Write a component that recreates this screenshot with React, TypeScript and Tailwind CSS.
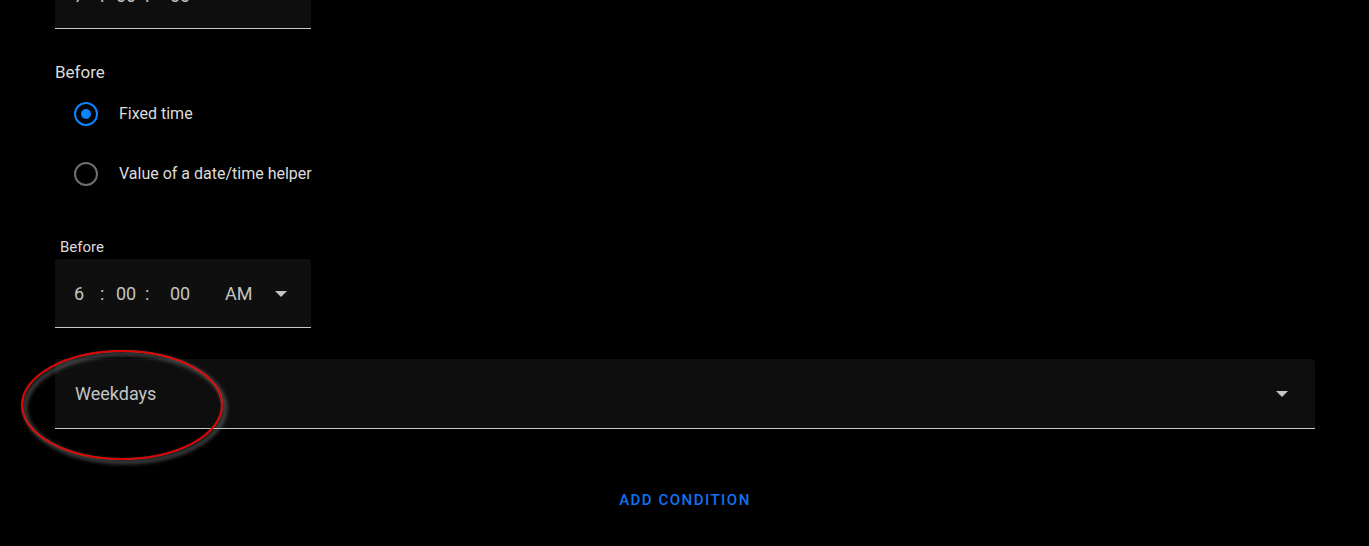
import React from "react"

function Caret({ className = "" }: { className?: string }) {
  return (
    <svg className={className} width="12" height="6" viewBox="0 0 12 6" fill="currentColor">
      <path d="M0 0l6 6 6-6z" />
    </svg>
  )
}

function TimeValue({ h, m, s, ap }: { h: string; m: string; s: string; ap: string }) {
  return (
    <div className="flex items-center text-[18px] leading-[22px] text-[#c4c4c4]">
      <span className="ml-[19px] w-[26px]">{h}</span>
      <span className="w-[16px]">:</span>
      <span className="w-[29px]">{m}</span>
      <span className="w-[25px]">:</span>
      <span className="w-[55px]">{s}</span>
      <span className="w-[50px]">{ap}</span>
      {ap && <Caret className="text-[#c4c4c4]" />}
    </div>
  )
}

function Radio({ checked, label }: { checked: boolean; label: string }) {
  return (
    <div className="flex h-[60px] items-center">
      <div className="flex w-[64px] justify-center">
        <span
          className={`flex h-[24px] w-[24px] items-center justify-center rounded-full border-2 ${
            checked ? "border-[#0a84ff]" : "border-[#6e6e6e]"
          }`}
        >
          {checked && <span className="h-[10px] w-[10px] rounded-full bg-[#0a84ff]" />}
        </span>
      </div>
      <span className="pl-[1px] text-[16px] text-[#dcdcdc]">{label}</span>
    </div>
  )
}

export default function App() {
  return (
    <div className="relative h-[546px] w-[1369px] overflow-hidden bg-black font-['Roboto','Liberation_Sans',sans-serif]">
      <div className="ml-[55px] flex w-[1260px] flex-col">
        {/* previous time field, scrolled mostly out of view */}
        <div className="-mt-[40px] flex h-[69px] w-[256px] items-center rounded-t border-b border-[#c8c8c8] bg-[#0e0e0e] pt-[3px]">
          <TimeValue h="7" m="00" s="00" ap="" />
        </div>

        <div className="mt-[33px] text-[17px] leading-[20px] text-[#dcdcdc]">Before</div>

        <div className="-ml-[1px] mt-[2px]">
          <Radio checked label="Fixed time" />
          <Radio checked={false} label="Value of a date/time helper" />
        </div>

        <div className="mt-[34px] pl-[5px] text-[15px] leading-[18px] text-[#dcdcdc]">Before</div>
        <div className="mt-[3px] flex h-[69px] w-[256px] items-center rounded-t border-b border-[#c8c8c8] bg-[#0f0f0f] pt-[2px]">
          <TimeValue h="6" m="00" s="00" ap="AM" />
        </div>

        <div className="mt-[31px] flex h-[70px] items-center justify-between rounded-t border-b border-[#c8c8c8] bg-[#0e0e0e] pl-[20px] pr-[27px]">
          <span className="text-[18px] text-[#c4c4c4]">Weekdays</span>
          <Caret className="text-[#c4c4c4]" />
        </div>

        <div className="mt-[61px] flex justify-center">
          <button className="text-[15px] font-medium uppercase leading-[20px] tracking-[1.5px] text-[#0e72f5]">
            Add condition
          </button>
        </div>
      </div>

      {/* annotation */}
      <svg className="pointer-events-none absolute left-0 top-0" width="1369" height="546">
        <defs>
          <filter id="sh" x="-20%" y="-20%" width="140%" height="140%">
            <feDropShadow dx="3" dy="3" stdDeviation="2" floodColor="#9a9a9a" floodOpacity="0.9" />
          </filter>
        </defs>
        <ellipse cx="122" cy="405" rx="100" ry="54" fill="none" stroke="#e00000" strokeWidth="2" filter="url(#sh)" />
      </svg>
    </div>
  )
}
